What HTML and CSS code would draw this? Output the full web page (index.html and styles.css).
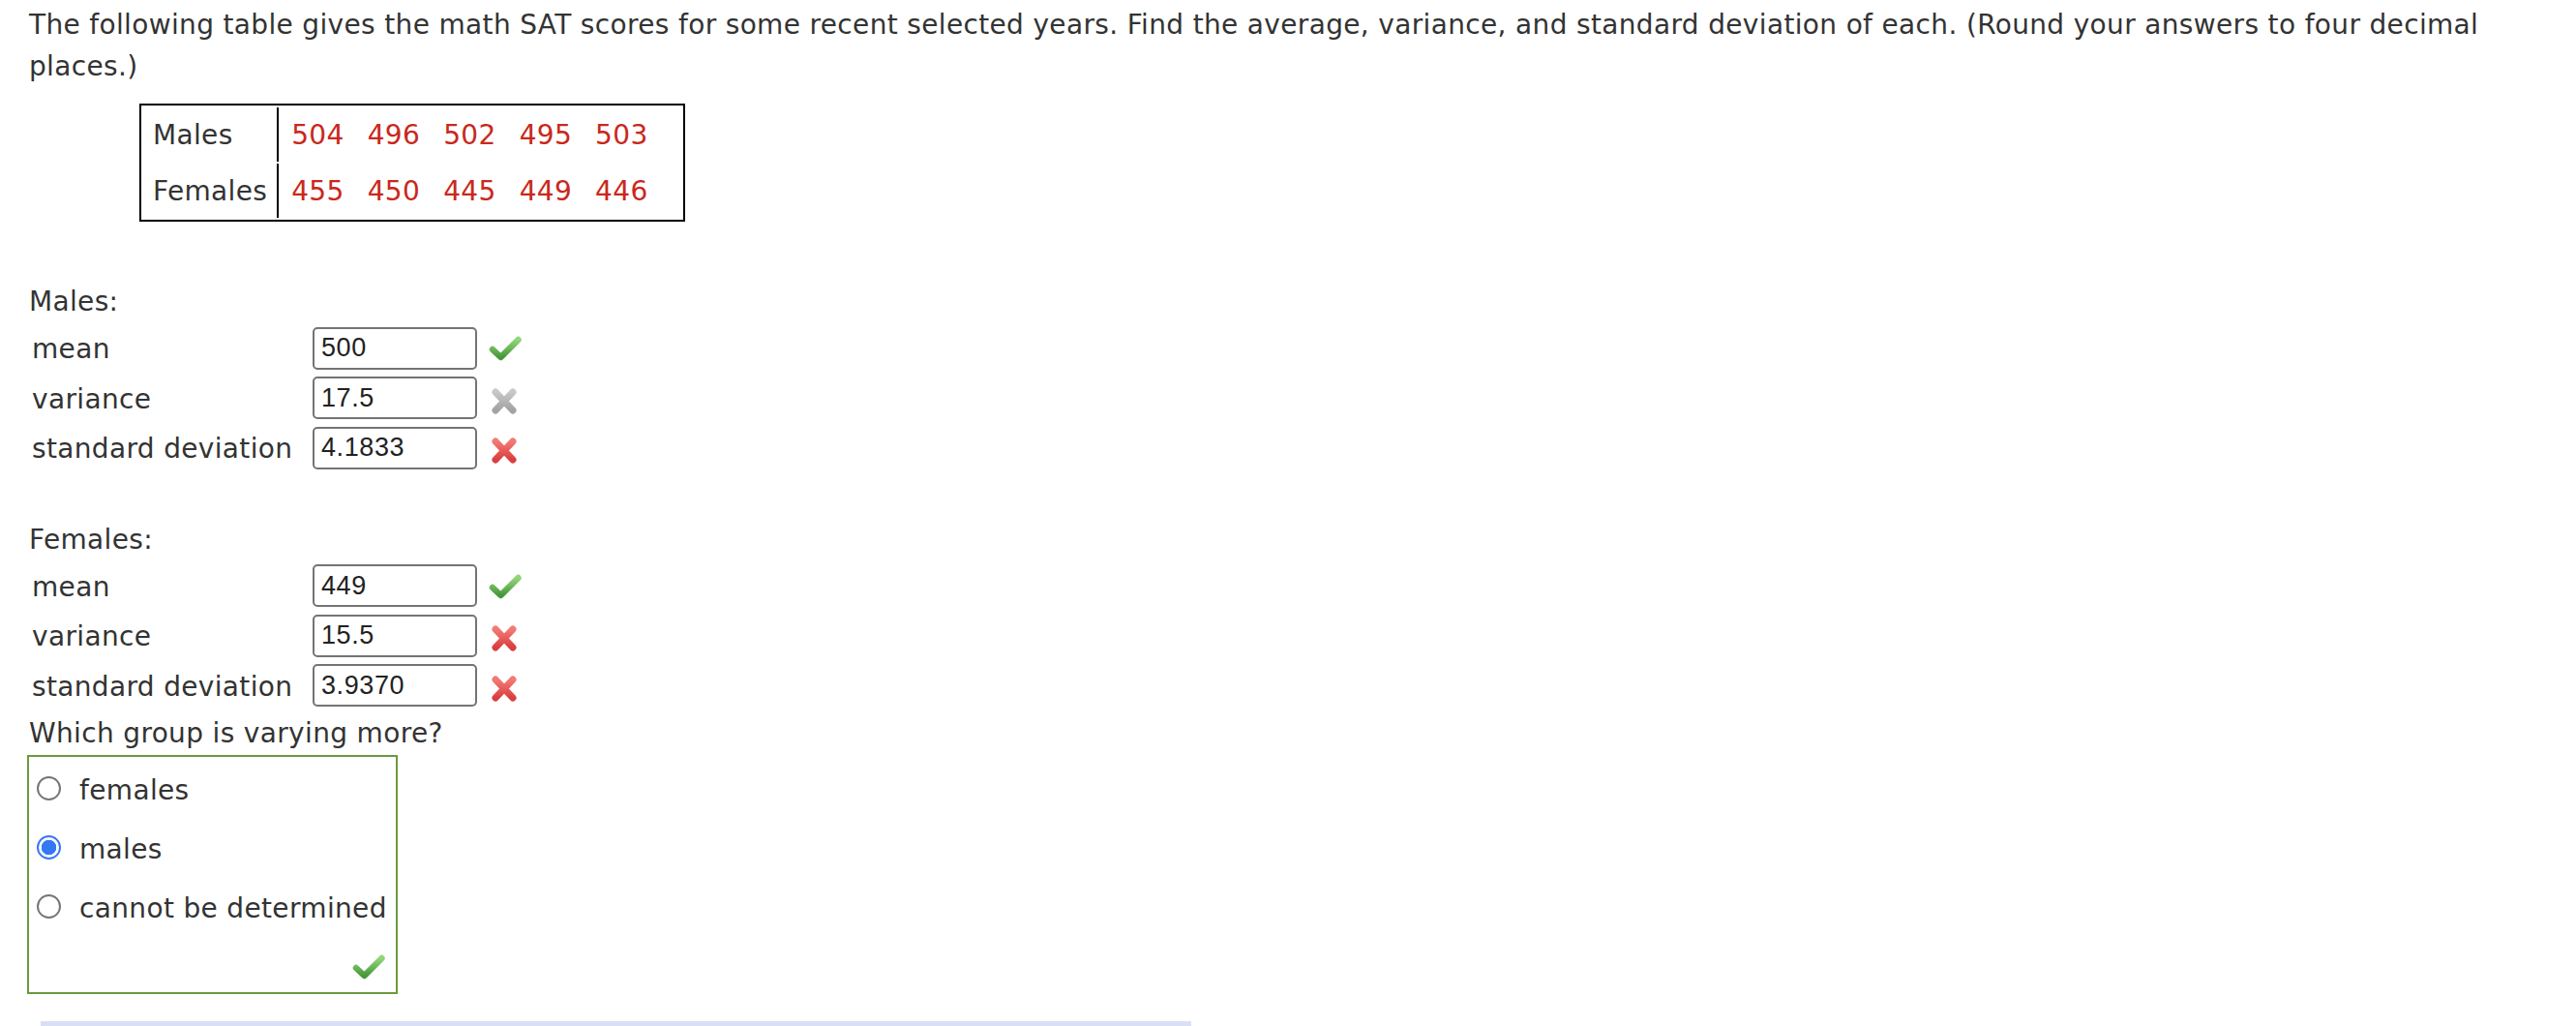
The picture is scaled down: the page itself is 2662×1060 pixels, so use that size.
FILE: index.html
```html
<!DOCTYPE html>
<html>
<head>
<meta charset="utf-8">
<link rel="stylesheet" href="styles.css">
</head>
<body>
<div class="page">
  <p class="intro">The following table gives the math SAT scores for some recent selected years. Find the average, variance, and standard deviation of each. (Round your answers to four decimal places.)</p>
  <table class="data">
    <tr><td class="lbl">Males</td><td class="num">504</td><td class="num">496</td><td class="num">502</td><td class="num">495</td><td class="num">503</td></tr>
    <tr><td class="lbl">Females</td><td class="num">455</td><td class="num">450</td><td class="num">445</td><td class="num">449</td><td class="num">446</td></tr>
  </table>

  <div class="ghead first">Males:</div>
  <div class="rows">
    <div class="row"><span class="rlabel">mean</span><input class="ans" type="text" value="500" readonly>
      <svg class="icon check" viewBox="0 0 34 27"><defs><linearGradient id="gc1" x1="0" y1="0" x2="0" y2="1"><stop offset="0" stop-color="#93d67a"/><stop offset="1" stop-color="#47973a"/></linearGradient></defs><path d="M4 15 L12.5 23 L30.5 5" fill="none" stroke="url(#gc1)" stroke-width="6.5" stroke-linecap="round" stroke-linejoin="round"/></svg></div>
    <div class="row"><span class="rlabel">variance</span><input class="ans" type="text" value="17.5" readonly>
      <svg class="icon cross" viewBox="0 0 28 29"><defs><linearGradient id="gg1" x1="0" y1="0" x2="0" y2="1"><stop offset="0" stop-color="#c8c8c8"/><stop offset="1" stop-color="#a2a2a2"/></linearGradient></defs><path d="M5 5 L23 24 M23 5 L5 24" fill="none" stroke="url(#gg1)" stroke-width="7" stroke-linecap="round"/></svg></div>
    <div class="row"><span class="rlabel">standard deviation</span><input class="ans" type="text" value="4.1833" readonly>
      <svg class="icon cross" viewBox="0 0 28 29"><defs><linearGradient id="gr1" x1="0" y1="0" x2="0" y2="1"><stop offset="0" stop-color="#f27a76"/><stop offset="1" stop-color="#d93f3f"/></linearGradient></defs><path d="M5 5 L23 24 M23 5 L5 24" fill="none" stroke="url(#gr1)" stroke-width="7" stroke-linecap="round"/></svg></div>
  </div>

  <div class="ghead second">Females:</div>
  <div class="rows">
    <div class="row"><span class="rlabel">mean</span><input class="ans" type="text" value="449" readonly>
      <svg class="icon check" viewBox="0 0 34 27"><defs><linearGradient id="gc2" x1="0" y1="0" x2="0" y2="1"><stop offset="0" stop-color="#93d67a"/><stop offset="1" stop-color="#47973a"/></linearGradient></defs><path d="M4 15 L12.5 23 L30.5 5" fill="none" stroke="url(#gc2)" stroke-width="6.5" stroke-linecap="round" stroke-linejoin="round"/></svg></div>
    <div class="row"><span class="rlabel">variance</span><input class="ans" type="text" value="15.5" readonly>
      <svg class="icon cross" viewBox="0 0 28 29"><defs><linearGradient id="gr2" x1="0" y1="0" x2="0" y2="1"><stop offset="0" stop-color="#f27a76"/><stop offset="1" stop-color="#d93f3f"/></linearGradient></defs><path d="M5 5 L23 24 M23 5 L5 24" fill="none" stroke="url(#gr2)" stroke-width="7" stroke-linecap="round"/></svg></div>
    <div class="row"><span class="rlabel">standard deviation</span><input class="ans" type="text" value="3.9370" readonly>
      <svg class="icon cross" viewBox="0 0 28 29"><defs><linearGradient id="gr3" x1="0" y1="0" x2="0" y2="1"><stop offset="0" stop-color="#f27a76"/><stop offset="1" stop-color="#d93f3f"/></linearGradient></defs><path d="M5 5 L23 24 M23 5 L5 24" fill="none" stroke="url(#gr3)" stroke-width="7" stroke-linecap="round"/></svg></div>
  </div>

  <div class="ghead third">Which group is varying more?</div>
  <div class="choices">
    <div class="choice"><span class="radio"></span><span class="ctext">females</span></div>
    <div class="choice"><span class="radio on"></span><span class="ctext">males</span></div>
    <div class="choice"><span class="radio"></span><span class="ctext">cannot be determined</span></div>
    <div class="cfoot">
      <svg class="icon check" viewBox="0 0 34 27"><defs><linearGradient id="gc3" x1="0" y1="0" x2="0" y2="1"><stop offset="0" stop-color="#93d67a"/><stop offset="1" stop-color="#47973a"/></linearGradient></defs><path d="M4 15 L12.5 23 L30.5 5" fill="none" stroke="url(#gc3)" stroke-width="6.5" stroke-linecap="round" stroke-linejoin="round"/></svg>
    </div>
  </div>
  <div class="bottombar"></div>
</div>
</body>
</html>
```
FILE: styles.css
```css
html, body {
  margin: 0;
  padding: 0;
  background: #ffffff;
}
body {
  font-family: "DejaVu Sans", Verdana, sans-serif;
  font-size: 28px;
  line-height: 43px;
  letter-spacing: 0.34px;
  color: #333333;
}
.page {
  padding: 4px 30px 0 30px;
}
.intro {
  margin: 0;
  max-width: 2580px;
}
.data {
  margin: 17px 0 0 114px;
  border: 2px solid #000000;
  border-spacing: 2px;
}
.data td {
  height: 56px;
  padding: 0;
  vertical-align: middle;
  white-space: nowrap;
}
.data .lbl {
  padding: 0 10px 0 10px;
  border-right: 2px solid #000000;
}
.data .num {
  padding: 0 11px;
  color: #c9281c;
}
.data .num:last-child {
  padding-right: 34px;
}
.ghead.first {
  margin-top: 61px;
}
.ghead.second {
  margin-top: 51px;
}
.ghead.third {
  margin-top: 6px;
}
.rows {
  display: flex;
  flex-direction: column;
  gap: 7.5px;
  padding-left: 3px;
  margin-top: 4.5px;
}
.row {
  display: flex;
  align-items: center;
  height: 44px;
}
.rlabel {
  width: 290px;
  flex: none;
  padding-top: 2px;
  white-space: nowrap;
}
.ans {
  box-sizing: border-box;
  width: 170px;
  height: 44px;
  margin: 0;
  padding: 0 0 0 7px;
  border: 2px solid #747474;
  border-radius: 5px;
  background: #ffffff;
  font-family: "Liberation Sans", Arial, sans-serif;
  font-size: 27px;
  letter-spacing: 0.6px;
  color: #222222;
  outline: none;
}
.icon {
  display: block;
  flex: none;
}
.row .icon.check {
  width: 34px;
  height: 27px;
  margin-left: 12px;
}
.row .icon.cross {
  width: 28px;
  height: 29px;
  margin-left: 14px;
  margin-top: 6px;
}
.choices {
  box-sizing: border-box;
  width: 383px;
  margin: 1px 0 0 -2px;
  border: 2px solid #6a9a3d;
  padding-top: 2px;
}
.choice {
  display: flex;
  align-items: center;
  height: 61px;
  padding-left: 8px;
  white-space: nowrap;
}
.radio {
  box-sizing: border-box;
  width: 25px;
  height: 25px;
  flex: none;
  border-radius: 50%;
  border: 2px solid #767676;
  background: #ffffff;
  margin-right: 19px;
}
.radio.on {
  border: 2.5px solid #3478f6;
  background: radial-gradient(circle, #3478f6 0, #3478f6 7.5px, #ffffff 8px);
}
.ctext {
  padding-top: 3px;
}
.cfoot {
  display: flex;
  justify-content: flex-end;
  height: 58px;
  box-sizing: border-box;
  padding: 18px 11px 0 0;
}
.cfoot .icon.check {
  width: 34px;
  height: 27px;
}
.bottombar {
  margin: 28px 0 0 12px;
  width: 1189px;
  height: 20px;
  background: #d9dff5;
}
```
